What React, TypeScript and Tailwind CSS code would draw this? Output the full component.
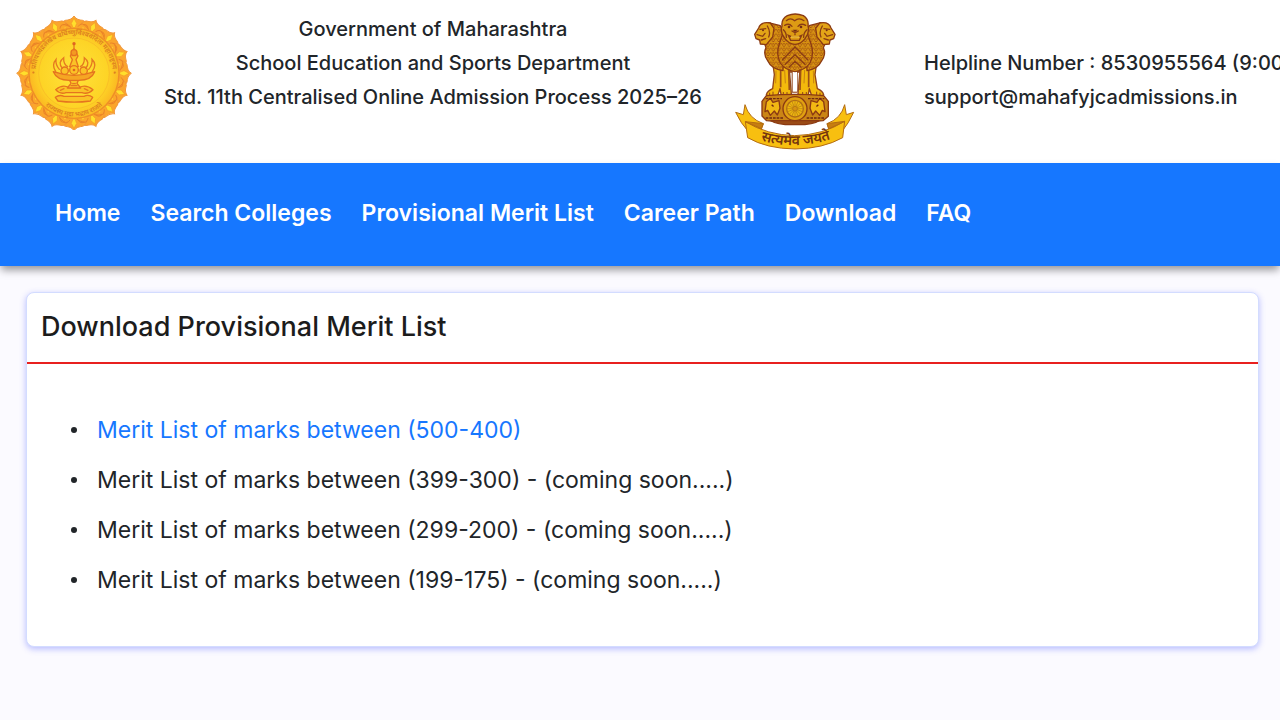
import type { ReactNode } from "react";

const navItems = ["Home", "Search Colleges", "Provisional Merit List", "Career Path", "Download", "FAQ"];

const meritLists = [
    { range: "500-400", available: true },
    { range: "399-300", available: false },
    { range: "299-200", available: false },
    { range: "199-175", available: false },
];

const PETALS = Array.from({ length: 16 }, (_, i) => i * 22.5);

function StateSeal() {
    return (
        <svg viewBox="45 35 354 354" className="w-[118px] h-[118px] shrink-0" role="img" aria-label="Government of Maharashtra seal">
            <defs>
                <radialGradient id="sealGold">
                    <stop offset="0" stopColor="#ffe23a" />
                    <stop offset="0.75" stopColor="#fdd426" />
                    <stop offset="1" stopColor="#fbb822" />
                </radialGradient>
                <path id="sealRing" d="M141 302 A116 116 0 1 1 303 302" />
                <path id="sealRingBottom" d="M122 300 A128 128 0 0 0 322 300" />
            </defs>

            {/* Scalloped rim */}
            {PETALS.map((a) => (
                <g key={a} transform={`rotate(${a} 222 219)`}>
                    <path d="M222 47 C228 57 238 59 248 60 C258 64 261 74 259 88 L222 114 L185 88 C183 74 186 64 196 60 C206 59 216 57 222 47Z" fill="#fba52c" stroke="#f1973a" strokeWidth="3" />
                </g>
            ))}
            <circle cx="222" cy="219" r="146" fill="#fba82a" />
            {PETALS.map((a) => (
                <g key={a} transform={`rotate(${a} 222 219)`}>
                    <path d="M222 54 L230 69 L225 82 H219 L214 69Z" fill="#ffdf2c" stroke="#f39a26" strokeWidth="2" />
                    <path d="M234 79 Q243 66 253 74 T267 89 M210 79 Q201 66 191 74" fill="none" stroke="#ea8428" strokeWidth="3" />
                    <circle cx="249" cy="84" r="3" fill="#ffcc32" />
                </g>
            ))}

            <circle cx="222" cy="219" r="135" fill="url(#sealGold)" stroke="#ef8f26" strokeWidth="4" />
            <circle cx="222" cy="219" r="106" fill="none" stroke="#f7b727" strokeWidth="2" />
            <text fill="#dd8020" fontSize="20" fontWeight="600">
                <textPath href="#sealRing" startOffset="50%" textAnchor="middle">
                    • प्रतिपच्चंद्रलेखेव वर्धिष्णुर्विश्ववंदिता महाराष्ट्रस्य •
                </textPath>
            </text>
            <text fill="#dd8020" fontSize="20" fontWeight="600">
                <textPath href="#sealRingBottom" startOffset="50%" textAnchor="middle">
                    राज्यस्य मुद्रा भद्राय राजते
                </textPath>
            </text>

            {/* Lamp */}
            <g fill="#fbc226" stroke="#e5741f" strokeWidth="4" strokeLinejoin="round">
                <path d="M166 291 Q178 282 192 288 L252 288 Q266 281 278 291 L271 302 Q222 309 174 302Z" />
                <path d="M167 268 Q188 250 207 262 L237 262 Q257 250 279 268 Q264 283 246 277 L198 277 Q180 283 167 268Z" />
                <path d="M208 238 H236 L231 249 L242 263 H202 L213 249Z" />
                <path d="M160 214 Q222 236 284 214 Q275 239 236 240 H208 Q170 239 160 214Z" fill="#f6a623" />
                <path d="M211 167 L222 145 L234 167 L228 178 L235 199 H209 L217 178Z" />
                <circle cx="222" cy="157" r="9" fill="#f39a22" />
                <circle cx="222" cy="209" r="13" />
                <circle cx="194" cy="211" r="11" />
                <circle cx="251" cy="211" r="11" />
            </g>
            <g fill="none" stroke="#e57a20" strokeWidth="4" strokeLinecap="round">
                <path d="M222 131V145M167 214Q154 192 168 177Q166 193 178 207M187 204Q172 186 191 172Q190 191 203 199M277 214Q292 192 276 177Q278 193 266 207M257 204Q272 186 253 172Q254 191 241 199" />
                <path d="M181 270L192 265M253 265L264 270M218 250H226M213 256H231" />
            </g>
            <circle cx="222" cy="130" r="5" fill="#df6520" />
            <circle cx="222" cy="209" r="4" fill="#df6520" />
        </svg>
    );
}

function NationalEmblem() {
    return (
        <svg viewBox="39 36 369 414" className="w-[123px] h-[138px] shrink-0" role="img" aria-label="National emblem of India">
            <defs>
                <path id="motto" d="M90 410 Q224 463 364 406" />
                <pattern id="mane" width="16" height="14" patternUnits="userSpaceOnUse">
                    <rect width="16" height="14" fill="#d8930f" />
                    <path d="M0 3Q4 12 8 3Q12 12 16 3M-4 10Q0 18 4 10Q8 18 12 10Q16 18 20 10" fill="none" stroke="#9c4c14" strokeWidth="2.5" />
                    <circle cx="8" cy="12" r="2" fill="#efb01d" />
                </pattern>
            </defs>

            {/* Legs */}
            <g fill="#f3b90c" stroke="#91451a" strokeWidth="4" strokeLinejoin="round">
                <path d="M157 180 L207 196 L214 282 Q199 294 183 283 L180 266 L173 287 Q153 298 139 284 Q142 273 158 266 L163 224Z" />
                <path d="M291 180 L241 196 L234 282 Q249 294 265 283 L268 266 L275 287 Q295 298 311 284 Q308 273 292 266 L285 224Z" />
                <path d="M207 193 H241 L240 216 H231 V276 H217 V216 H208Z" fill="#c17a16" />
            </g>
            <path d="M218 215H231V275H218Z" fill="#fff" />
            <path d="M182 202L182 262M206 210L208 270M266 202L266 262M242 210L240 270" stroke="#9e5217" strokeWidth="5" fill="none" />
            <path d="M168 212L167 250M280 212L281 250M194 210L196 250M254 210L252 250" stroke="#c98312" strokeWidth="3" fill="none" />
            <path d="M149 278V287M159 275V289M190 276V286M201 276V286M248 276V286M259 276V286M290 275V289M300 278V287" stroke="#91451a" strokeWidth="3" />

            {/* Side lions */}
            <g stroke="#8b3a12" strokeWidth="4" strokeLinejoin="round">
                <path d="M145 68 L181 77 L194 105 L189 212 Q154 207 144 184 Q128 163 138 143 L131 122Z" fill="url(#mane)" />
                <path d="M303 68 L267 77 L256 105 L261 212 Q294 207 304 184 Q320 163 310 143 L319 122Z" fill="url(#mane)" />
                <path d="M151 69 Q122 64 116 84 L104 103 L108 116 L119 120 L121 132 L139 134 L158 111 L162 85Z" fill="#e3a417" />
                <path d="M299 69 Q327 64 333 84 L345 103 L341 116 L330 120 L328 132 L310 134 L291 111 L287 85Z" fill="#e3a417" />
                {/* Front lion */}
                <path d="M189 98 L179 128 Q166 161 181 189 Q195 210 225 215 Q256 210 270 189 Q284 161 272 128 L261 98Z" fill="url(#mane)" />
                <path d="M202 47 Q225 37 250 47 Q267 58 264 78 Q270 97 255 116 Q244 132 225 133 Q206 132 195 116 Q179 97 186 78 Q183 58 202 47Z" fill="#dd9b14" />
            </g>
            <g fill="none" stroke="#8a3c14" strokeWidth="4" strokeLinecap="round">
                <path d="M199 62Q211 51 224 62Q237 51 252 62M194 76Q207 68 216 79M234 79Q243 68 257 76M216 93L225 98L235 93M225 98V104M205 106Q225 116 245 106L238 121H212ZM190 89Q200 99 199 112M261 89Q250 99 251 112" />
                <path d="M120 88L137 86M111 104L128 109L135 100M124 120L137 116M142 78Q153 96 146 111M329 88L312 86M338 104L321 109L314 100M325 120L312 116M307 78Q296 96 303 111" />
                <path d="M187 180L225 141L264 180M196 193L225 164L255 193M208 201L225 184L243 201" />
            </g>
            <g fill="#732b13">
                <circle cx="207" cy="81" r="4" />
                <circle cx="243" cy="81" r="4" />
                <path d="M218 89H233L225 96Z" />
                <circle cx="129" cy="91" r="3" />
                <circle cx="320" cy="91" r="3" />
            </g>
            <path d="M213 111H238" stroke="#ffd341" strokeWidth="4" />

            {/* Abacus */}
            <g stroke="#8b3a12" strokeWidth="4" strokeLinejoin="round">
                <path d="M139 287 Q224 279 311 287 L325 304 V349 L309 362 Q224 371 140 362 L126 348 V304Z" fill="#cb8515" />
                <path d="M153 362 H297 Q280 375 225 374 Q171 375 153 362Z" fill="#9b4b16" />
                <circle cx="225" cy="326" r="36" fill="#e0a011" />
                <circle cx="225" cy="326" r="25" fill="#edb70f" stroke="#b06c15" />
                <path d="M139 305 L151 295 L159 307 L177 302 L180 325 L172 345 L163 333 L151 346 L143 331 L135 335Z" fill="#f2b813" />
                <path d="M311 305 L299 295 L291 307 L273 302 L270 325 L278 345 L287 333 L299 346 L307 331 L315 335Z" fill="#f2b813" />
            </g>
            {PETALS.map((a) => (
                <path key={a} d="M225 319V301" stroke="#b87a14" strokeWidth="2" transform={`rotate(${a} 225 326)`} />
            ))}
            <circle cx="225" cy="326" r="7" fill="#d79211" stroke="#a96a14" strokeWidth="2" />
            <path d="M137 296H186M264 296H313M137 354H190M260 354H313M155 314L163 322M295 314L287 322" stroke="#6f2913" strokeWidth="4" strokeDasharray="8 3" />

            {/* Ribbon */}
            <g fill="#f8bf10" stroke="#b36b12" strokeWidth="3" strokeLinejoin="round">
                <path d="M75 314 Q87 356 130 371 L123 391 L87 397 Q62 370 47 337 L70 344Z" />
                <path d="M374 314 Q363 356 321 371 L327 391 L364 397 Q386 370 401 337 L379 344Z" />
                <path d="M76 365 Q142 405 224 407 Q308 405 374 364 L368 413 Q309 446 225 447 Q140 446 83 413Z" />
                <path d="M76 365 L130 371 L124 386Z M374 364 L321 371 L327 386Z" fill="#c77e10" />
            </g>
            <text fill="#74340f" fontSize="42" fontWeight="600">
                <textPath href="#motto" startOffset="50%" textAnchor="middle">
                    सत्यमेव जयते
                </textPath>
            </text>
        </svg>
    );
}

function Card({ title, children }: { title: string; children: ReactNode }) {
    return (
        <section className="bg-white rounded-lg border border-[#d3dcff] shadow-[0_2px_6px_rgba(100,110,255,0.45)]">
            <h1 className="px-3.5 pt-4 pb-[17px] text-[27px] leading-9 font-medium text-[#1c1c1c] border-b-2 border-[#e8201f]">
                {title}
            </h1>
            {children}
        </section>
    );
}

export default function App() {
    return (
        <div className="min-h-screen bg-[#fbfaff] text-[#212529] font-['Inter','Noto_Sans',sans-serif] overflow-x-hidden">
            {/* Header */}
            <header className="flex items-start bg-white pt-3 pb-[13px] pl-[15px] whitespace-nowrap">
                <StateSeal />
                <div className="w-[600px] shrink-0 text-center text-xl leading-[34px] font-medium">
                    <p>Government of Maharashtra</p>
                    <p>School Education and Sports Department</p>
                    <p>Std. 11th Centralised Online Admission Process 2025–26</p>
                </div>
                <NationalEmblem />
                <address className="ml-17 pt-[34px] not-italic text-xl leading-[34px] font-medium">
                    <p>Helpline Number : 8530955564 (9:00</p>
                    <a href="mailto:support@mahafyjcadmissions.in">support@mahafyjcadmissions.in</a>
                </address>
            </header>

            <nav className="relative bg-[#1677ff] px-[55px] pt-[31px] pb-[33px] shadow-[0_5px_8px_-1px_rgba(0,0,0,0.4)]">
                <ul className="flex flex-wrap gap-[30px] text-[23px] leading-[39px] font-semibold text-white">
                    {navItems.map((item) => (
                        <li key={item}>
                            <a href="#">{item}</a>
                        </li>
                    ))}
                </ul>
            </nav>

            <main className="pt-[26px] pl-[26px] pr-[21px] pb-12">
                <Card title="Download Provisional Merit List">
                    <ul className="pl-11 pt-[41px] pb-[41px] text-[23px] leading-[50px]">
                        {meritLists.map(({ range, available }) => (
                            <li key={range} className="flex items-center gap-5 before:size-1.5 before:rounded-full before:bg-current">
                                {available ? (
                                    <a href="#" className="text-[#1677ff]">Merit List of marks between ({range})</a>
                                ) : (
                                    <span>Merit List of marks between ({range}) - (coming soon.....)</span>
                                )}
                            </li>
                        ))}
                    </ul>
                </Card>
            </main>
        </div>
    );
}
